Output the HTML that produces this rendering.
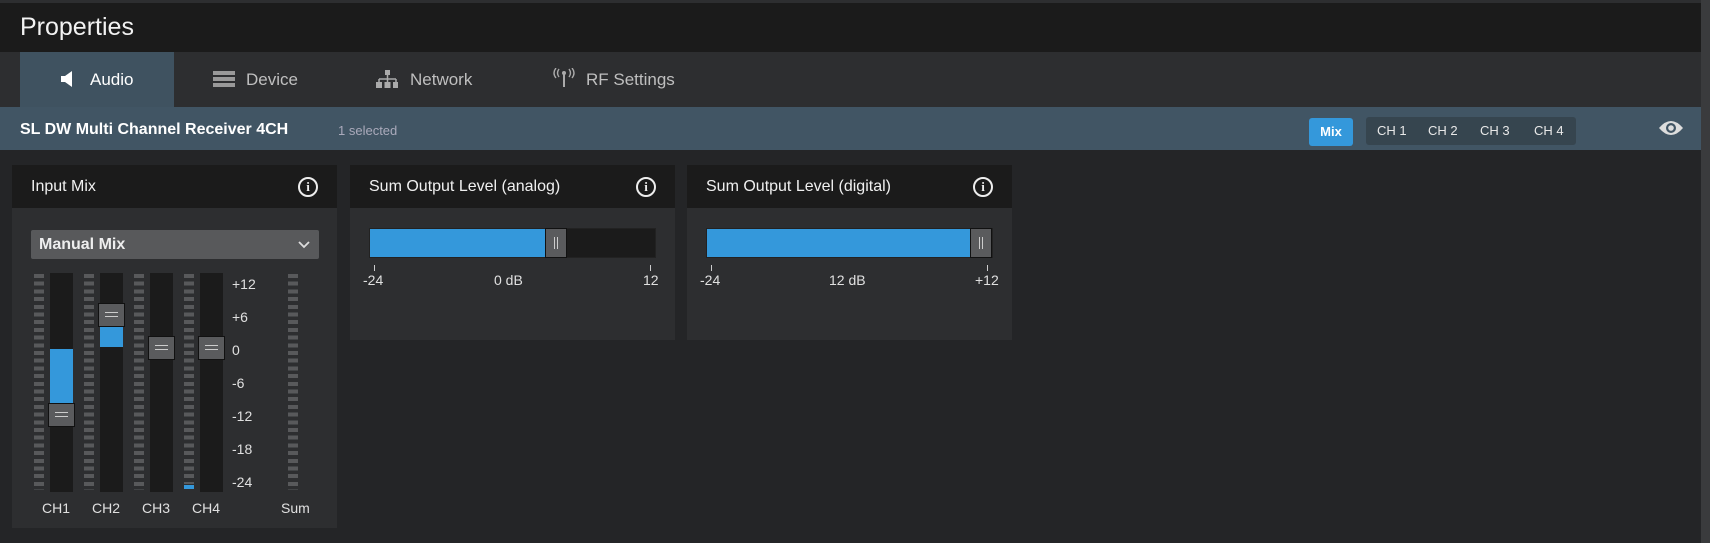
<!DOCTYPE html>
<html><head><meta charset="utf-8"><style>
*{margin:0;padding:0;box-sizing:border-box}
body{width:1710px;height:543px;background:#242527;font-family:"Liberation Sans",sans-serif;color:#e6e6e6;position:relative;overflow:hidden}
.a{position:absolute}
.title{left:0;top:0;width:1701px;height:52px;background:#1b1b1b;border-top:3px solid #2d2e30}
.title span{position:absolute;left:20px;top:10px;font-size:25px;color:#f2f2f2}
.tabs{left:0;top:52px;width:1701px;height:55px;background:#2d2e30}
.tab{position:absolute;top:0;height:55px;line-height:55px;font-size:17px;color:#bfbfbf}
.sub{left:0;top:107px;width:1701px;height:43px;background:#415564}
.scroll{left:1701px;top:0;width:9px;height:543px;background:#3a3b3d}
.panel{position:absolute;background:#2d2e30}
.ph{position:absolute;left:0;top:0;right:0;height:43px;background:#1b1b1b;font-size:16px;line-height:43px;padding-left:19px;color:#f0f0f0}
.info{position:absolute;top:12px;width:20px;height:20px;border:2px solid #eee;border-radius:50%;font:bold 13px/16px "Liberation Serif",serif;text-align:center;color:#eee}
.seg{position:absolute;width:10px;background:repeating-linear-gradient(#58595b 0 4px,transparent 4px 7.7px)}
.track{position:absolute;width:23px;top:273px;height:219px;background:#1b1b1b}
.blue{position:absolute;background:#3498db}
.hd{position:absolute;width:27px;height:24px;background:#5a5b5d;border:1.5px solid #111}
.hd:before,.hd:after{content:"";position:absolute;left:6px;right:6px;height:1px;background:#ccc;top:8px}
.hd:after{top:12px}
.lbl{position:absolute;font-size:14px;color:#e0e0e0}
.bar{position:absolute;height:30px;background:#1b1b1b;border:1px solid #222}
.vh{position:absolute;top:-1px;width:22px;height:30px;background:#5a5b5d;border:1.5px solid #111}
.vh:before,.vh:after{content:"";position:absolute;top:8px;height:12px;width:1px;background:#ccc;left:8px}
.vh:after{left:11px}
.tick{position:absolute;width:1px;height:6px;background:#ccc;top:265px}
</style></head><body>
<div class="a title"><span>Properties</span></div>
<div class="a tabs">
 <div class="tab" style="left:20px;width:154px;background:#3f5260"></div>
 <svg class="a" style="left:60px;top:18px" width="18" height="18" viewBox="0 0 18 18"><path d="M1 6h4l7-5v16l-7-5H1z" fill="#fff"/></svg>
 <div class="tab" style="left:90px;color:#fff">Audio</div>
 <svg class="a" style="left:213px;top:19px" width="22" height="16"><rect x="0" y="0" width="22" height="4" fill="#999"/><rect x="0" y="6" width="22" height="4" fill="#999"/><rect x="0" y="12" width="22" height="4" fill="#999"/></svg>
 <div class="tab" style="left:246px">Device</div>
 <svg class="a" style="left:376px;top:18px" width="22" height="18"><rect x="9" y="0" width="5" height="5" fill="#aaa"/><path d="M11.5 5v4M3 9h17M3 9v3M11.5 9v3M20 9v3" stroke="#aaa" stroke-width="1.5" fill="none"/><rect x="0" y="12" width="6" height="6" fill="#aaa"/><rect x="8.5" y="12" width="6" height="6" fill="#aaa"/><rect x="17" y="12" width="5" height="6" fill="#aaa"/></svg>
 <div class="tab" style="left:410px">Network</div>
 <svg class="a" style="left:553px;top:16px" width="22" height="20"><circle cx="11" cy="5" r="2" fill="#aaa"/><path d="M11 6v13" stroke="#aaa" stroke-width="2"/><path d="M6 1q-3 4 0 8M16 1q3 4 0 8M3 0q-4 5 0 10M19 0q4 5 0 10" stroke="#aaa" stroke-width="1.4" fill="none"/></svg>
 <div class="tab" style="left:586px">RF Settings</div>
</div>
<div class="a sub">
 <span class="a" style="left:20px;top:14px;font-size:16px;font-weight:bold;color:#fff">SL DW Multi Channel Receiver 4CH</span>
 <span class="a" style="left:338px;top:16px;font-size:13px;color:#aab">1 selected</span>
 <div class="a" style="left:1309px;top:11px;width:44px;height:28px;background:#3498db;border-radius:3px;font-size:13px;font-weight:bold;line-height:28px;text-align:center;color:#fff">Mix</div>
 <div class="a" style="left:1366px;top:10px;width:210px;height:28px;background:#36454f;border-radius:3px;font-size:13px;line-height:28px;color:#e8e8e8">
  <span class="a" style="left:11px">CH 1</span><span class="a" style="left:62px">CH 2</span><span class="a" style="left:114px">CH 3</span><span class="a" style="left:168px">CH 4</span></div>
 <svg class="a" style="left:1658px;top:12px" width="26" height="18" viewBox="0 0 26 18"><path d="M1 9Q13-5 25 9Q13 23 1 9z" fill="#ddd"/><circle cx="13" cy="9" r="5" fill="#415564"/><circle cx="13" cy="9" r="2.8" fill="#ddd"/></svg>
</div>
<div class="a scroll"></div>

<div class="panel" style="left:12px;top:165px;width:325px;height:363px">
 <div class="ph">Input Mix</div><div class="info" style="left:286px">i</div>
</div>
<div class="a" style="left:31px;top:230px;width:288px;height:29px;background:#58595b;border-radius:2px;font-size:16px;font-weight:bold;line-height:29px;padding-left:8px;color:#eee">Manual Mix
 <svg class="a" style="left:267px;top:11px" width="12" height="8"><path d="M1 1l5 5 5-5" stroke="#ddd" stroke-width="1.8" fill="none"/></svg></div>
<div class="seg" style="left:34px;top:274px;height:216px"></div>
<div class="seg" style="left:84px;top:274px;height:216px"></div>
<div class="seg" style="left:134px;top:274px;height:216px"></div>
<div class="seg" style="left:184px;top:274px;height:210px"></div>
<div class="blue" style="left:184px;top:485px;width:10px;height:4px"></div>
<div class="seg" style="left:288px;top:274px;height:216px"></div>
<div class="track" style="left:50px"></div><div class="track" style="left:100px"></div><div class="track" style="left:150px"></div><div class="track" style="left:200px"></div>
<div class="blue" style="left:50px;top:349px;width:23px;height:56px"></div>
<div class="blue" style="left:100px;top:326px;width:23px;height:21px"></div>
<div class="hd" style="left:48px;top:403px"></div>
<div class="hd" style="left:98px;top:303px"></div>
<div class="hd" style="left:148px;top:336px"></div>
<div class="hd" style="left:198px;top:336px"></div>
<div class="lbl" style="left:232px;top:276px">+12</div>
<div class="lbl" style="left:232px;top:309px">+6</div>
<div class="lbl" style="left:232px;top:342px">0</div>
<div class="lbl" style="left:232px;top:375px">-6</div>
<div class="lbl" style="left:232px;top:408px">-12</div>
<div class="lbl" style="left:232px;top:441px">-18</div>
<div class="lbl" style="left:232px;top:474px">-24</div>
<div class="lbl" style="left:42px;top:500px">CH1</div>
<div class="lbl" style="left:92px;top:500px">CH2</div>
<div class="lbl" style="left:142px;top:500px">CH3</div>
<div class="lbl" style="left:192px;top:500px">CH4</div>
<div class="lbl" style="left:281px;top:500px">Sum</div>

<div class="panel" style="left:350px;top:165px;width:325px;height:175px">
 <div class="ph">Sum Output Level (analog)</div><div class="info" style="left:286px">i</div>
</div>
<div class="bar" style="left:369px;top:228px;width:287px"><div class="blue" style="left:0;top:0;width:176px;height:28px"></div><div class="vh" style="left:175px"></div></div>
<div class="tick" style="left:374px"></div><div class="tick" style="left:650px"></div>
<div class="lbl" style="left:363px;top:272px">-24</div>
<div class="lbl" style="left:494px;top:272px">0 dB</div>
<div class="lbl" style="left:643px;top:272px">12</div>

<div class="panel" style="left:687px;top:165px;width:325px;height:175px">
 <div class="ph">Sum Output Level (digital)</div><div class="info" style="left:286px">i</div>
</div>
<div class="bar" style="left:706px;top:228px;width:287px"><div class="blue" style="left:0;top:0;width:264px;height:28px"></div><div class="vh" style="left:263px"></div></div>
<div class="tick" style="left:711px"></div><div class="tick" style="left:987px"></div>
<div class="lbl" style="left:700px;top:272px">-24</div>
<div class="lbl" style="left:829px;top:272px">12 dB</div>
<div class="lbl" style="left:975px;top:272px">+12</div>
</body></html>
